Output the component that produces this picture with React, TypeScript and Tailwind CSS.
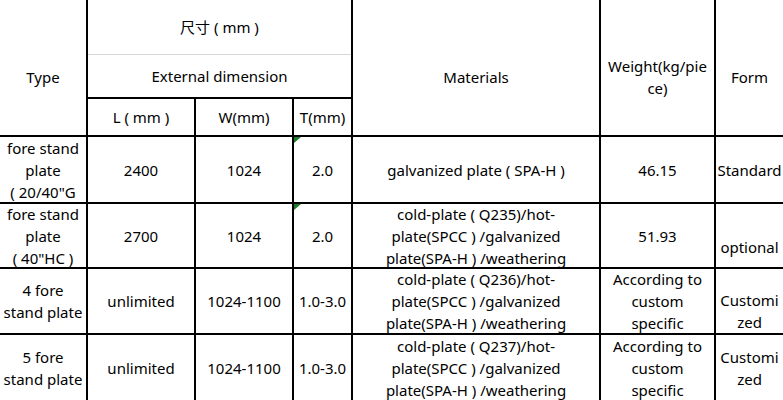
import React from 'react'

type Row = {
  type: string[]
  l: string
  w: string
  t: string
  materials: string[]
  weight: string[]
  form: string[]
  formPad?: string
  flag?: boolean
}

const rows: Row[] = [
  {
    type: ['fore stand', 'plate', '( 20/40"G'],
    l: '2400',
    w: '1024',
    t: '2.0',
    materials: ['galvanized plate ( SPA-H )'],
    weight: ['46.15'],
    form: ['Standard'],
    flag: true,
  },
  {
    type: ['fore stand', 'plate', '( 40"HC )'],
    l: '2700',
    w: '1024',
    t: '2.0',
    materials: ['cold-plate ( Q235)/hot-', 'plate(SPCC ) /galvanized', 'plate(SPA-H ) /weathering'],
    weight: ['51.93'],
    form: ['optional'],
    formPad: 'pt-[22px]',
    flag: true,
  },
  {
    type: ['4 fore', 'stand plate'],
    l: 'unlimited',
    w: '1024-1100',
    t: '1.0-3.0',
    materials: ['cold-plate ( Q236)/hot-', 'plate(SPCC ) /galvanized', 'plate(SPA-H ) /weathering'],
    weight: ['According to', 'custom', 'specific'],
    form: ['Customi', 'zed'],
    formPad: 'pt-[20px]',
  },
  {
    type: ['5 fore', 'stand plate'],
    l: 'unlimited',
    w: '1024-1100',
    t: '1.0-3.0',
    materials: ['cold-plate ( Q237)/hot-', 'plate(SPCC ) /galvanized', 'plate(SPA-H ) /weathering'],
    weight: ['According to', 'custom', 'specific'],
    form: ['Customi', 'zed'],
  },
]

const cell = 'bg-white flex flex-col items-center justify-center text-center overflow-hidden whitespace-nowrap leading-[22px]'

const Lines = ({ lines }: { lines: string[] }) => (
  <>
    {lines.map((line, i) => (
      <span key={i}>{line}</span>
    ))}
  </>
)

// excel's little green error marker
const Flag = () => (
  <svg className="absolute left-0 top-0" width="7" height="6" viewBox="0 0 7 6">
    <polygon points="0,0 7,0 0,6" fill="#1d7a2a" />
  </svg>
)

export default function App() {
  return (
    <div
      className="w-[783px] h-[400px] overflow-hidden bg-white text-[15px] text-black"
      style={{ fontFamily: '"Noto Sans", "Noto Sans CJK SC", sans-serif' }}
    >
      <div className="grid grid-cols-[86px_106px_96px_57px_246px_113px_67px] grid-rows-[97px_36px_65px_63px_64px_66px] gap-[2px] bg-black">
        {/* Header */}
        <div className={`${cell} row-span-2 pt-[18px]`}>Type</div>
        <div className="col-span-3 bg-white flex flex-col whitespace-nowrap">
          <div className="h-[55px] flex items-center justify-center border-b border-[#d6d6d6]">尺寸 ( mm )</div>
          <div className="flex-1 flex items-center justify-center">External dimension</div>
        </div>
        <div className={`${cell} row-span-2 pt-[18px]`}>Materials</div>
        <div className={`${cell} row-span-2 pt-[18px]`}>
          <Lines lines={['Weight(kg/pie', 'ce)']} />
        </div>
        <div className={`${cell} row-span-2 pt-[18px]`}>Form</div>
        <div className={cell}>L ( mm )</div>
        <div className={cell}>W(mm)</div>
        <div className={cell}>T(mm)</div>

        {/* Body */}
        {rows.map((row, index) => (
          <React.Fragment key={index}>
            <div className={cell}>
              <Lines lines={row.type} />
            </div>
            <div className={cell}>{row.l}</div>
            <div className={cell}>{row.w}</div>
            <div className={`${cell} relative`}>
              {row.flag && <Flag />}
              {row.t}
            </div>
            <div className={cell}>
              <Lines lines={row.materials} />
            </div>
            <div className={cell}>
              <Lines lines={row.weight} />
            </div>
            <div className={`${cell} ${row.formPad ?? ''}`}>
              <Lines lines={row.form} />
            </div>
          </React.Fragment>
        ))}
      </div>
    </div>
  )
}
